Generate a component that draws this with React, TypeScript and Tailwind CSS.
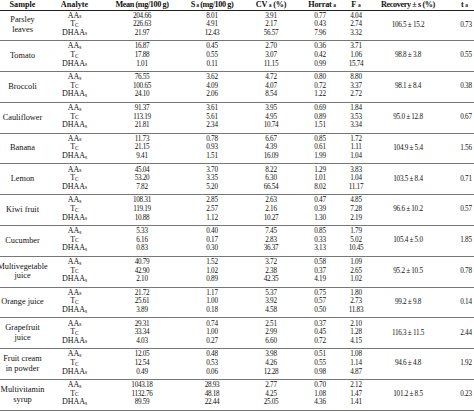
import React from "react";

type Row = [string, string, string, string, string];
type Group = { name: string[]; rows: [Row, Row, Row]; rec: string; t: string };

const groups: Group[] = [
  { name: ["Parsley", "leaves"], rows: [["204.66", "8.01", "3.91", "0.77", "4.04"], ["226.63", "4.91", "2.17", "0.43", "2.74"], ["21.97", "12.43", "56.57", "7.96", "3.32"]], rec: "106.5 ± 15.2", t: "0.73" },
  { name: ["Tomato"], rows: [["16.87", "0.45", "2.70", "0.36", "3.71"], ["17.88", "0.55", "3.07", "0.42", "1.06"], ["1.01", "0.11", "11.15", "0.99", "15.74"]], rec: "98.8 ± 3.8", t: "0.55" },
  { name: ["Broccoli"], rows: [["76.55", "3.62", "4.72", "0.80", "8.80"], ["100.65", "4.09", "4.07", "0.72", "3.37"], ["24.10", "2.06", "8.54", "1.22", "2.72"]], rec: "98.1 ± 8.4", t: "0.38" },
  { name: ["Cauliflower"], rows: [["91.37", "3.61", "3.95", "0.69", "1.84"], ["113.19", "5.61", "4.95", "0.89", "3.53"], ["21.81", "2.34", "10.74", "1.51", "3.34"]], rec: "95.0 ± 12.8", t: "0.67" },
  { name: ["Banana"], rows: [["11.73", "0.78", "6.67", "0.85", "1.72"], ["21.15", "0.93", "4.39", "0.61", "1.11"], ["9.41", "1.51", "16.09", "1.99", "1.04"]], rec: "104.9 ± 5.4", t: "1.56" },
  { name: ["Lemon"], rows: [["45.04", "3.70", "8.22", "1.29", "3.83"], ["53.20", "3.35", "6.30", "1.01", "1.04"], ["7.82", "5.20", "66.54", "8.02", "11.17"]], rec: "103.5 ± 8.4", t: "0.71" },
  { name: ["Kiwi fruit"], rows: [["108.31", "2.85", "2.63", "0.47", "4.85"], ["119.19", "2.57", "2.16", "0.39", "7.28"], ["10.88", "1.12", "10.27", "1.30", "2.19"]], rec: "96.6 ± 10.2", t: "0.57" },
  { name: ["Cucumber"], rows: [["5.33", "0.40", "7.45", "0.85", "1.79"], ["6.16", "0.17", "2.83", "0.33", "5.02"], ["0.83", "0.30", "36.37", "3.13", "10.45"]], rec: "105.4 ± 5.0", t: "1.85" },
  { name: ["Multivegetable", "juice"], rows: [["40.79", "1.52", "3.72", "0.58", "1.09"], ["42.90", "1.02", "2.38", "0.37", "2.65"], ["2.10", "0.89", "42.35", "4.19", "1.02"]], rec: "95.2 ± 10.5", t: "0.78" },
  { name: ["Orange juice"], rows: [["21.72", "1.17", "5.37", "0.75", "1.80"], ["25.61", "1.00", "3.92", "0.57", "2.73"], ["3.89", "0.18", "4.58", "0.50", "11.83"]], rec: "99.2 ± 9.8", t: "0.14" },
  { name: ["Grapefruit", "juice"], rows: [["29.31", "0.74", "2.51", "0.37", "2.10"], ["33.34", "1.00", "2.99", "0.45", "1.28"], ["4.03", "0.27", "6.60", "0.72", "4.15"]], rec: "116.3 ± 11.5", t: "2.44" },
  { name: ["Fruit cream", "in powder"], rows: [["12.05", "0.48", "3.98", "0.51", "1.08"], ["12.54", "0.53", "4.26", "0.55", "1.14"], ["0.49", "0.06", "12.28", "0.98", "4.87"]], rec: "94.6 ± 4.8", t: "1.92" },
  { name: ["Multivitamin", "syrup"], rows: [["1043.18", "28.93", "2.77", "0.70", "2.12"], ["1132.76", "48.18", "4.25", "1.08", "1.47"], ["89.59", "22.44", "25.05", "4.36", "1.41"]], rec: "101.2 ± 8.5", t: "0.23" },
];

const GRID = "grid grid-cols-[45px_59px_76px_64px_54px_44px_28px_76px_42px]";
const NUM = "text-[7.2px] tracking-[-0.3px]";

function Sup() {
  return <sup className="text-[5.5px] font-bold relative -top-[0.5px] ml-[1.5px]">a</sup>;
}

function Analyte({ i }: { i: number }) {
  if (i === 0)
    return (
      <span>
        AA<sub className="text-[5.5px] relative top-[0.5px]">s</sub>
      </span>
    );
  if (i === 1)
    return (
      <span>
        T<sub className="text-[5.5px] relative top-[0.5px]">C</sub>
      </span>
    );
  return (
    <span>
      DHAA<sub className="text-[5.5px] relative top-[0.5px]">s</sub>
    </span>
  );
}

function NumCol({ g, c }: { g: Group; c: number }) {
  return (
    <div className="flex flex-col items-center">
      {g.rows.map((r, i) => (
        <div key={i} className={`h-[8.6px] leading-[8.6px] whitespace-nowrap ${NUM}`}>
          {r[c]}
        </div>
      ))}
    </div>
  );
}

export default function App() {
  return (
    <div className="w-[474px] h-[412px] overflow-hidden bg-white text-[#111111] font-['Liberation_Serif',serif]">
      <div className="w-[488px]">
        <div className={`${GRID} h-[10.5px] border-b border-[#222222] font-bold text-[8.2px] leading-[9px] items-start`}>
          <div className="flex justify-center whitespace-nowrap">Sample</div>
          <div className="flex justify-center whitespace-nowrap">Analyte</div>
          <div className="flex justify-center whitespace-nowrap tracking-[-0.4px]">Mean (mg/100 g)</div>
          <div className="flex justify-center whitespace-nowrap tracking-[-0.4px]">
            <span>S<Sup /> (mg/100 g)</span>
          </div>
          <div className="flex justify-center whitespace-nowrap tracking-[-0.2px]">
            <span>CV<Sup /> (%)</span>
          </div>
          <div className="flex justify-center whitespace-nowrap tracking-[-0.2px] pl-[4px]">
            <span>Horrat<Sup /></span>
          </div>
          <div className="flex justify-center whitespace-nowrap">
            <span>F<Sup /></span>
          </div>
          <div className="flex justify-center whitespace-nowrap tracking-[-0.4px]">Recovery ± s (%)</div>
          <div className="flex justify-center whitespace-nowrap pr-[5px]">
            <span>t<Sup /></span>
          </div>
        </div>
        {groups.map((g, gi) => (
          <div key={gi} className={`${GRID} h-[30.8px] border-b border-[#777777] pt-[1.2px] text-[8px]`}>
            <div className="flex flex-col justify-center items-center leading-[9.5px] pb-[2px] text-[8.3px]">
              {g.name.map((n, i) => (
                <div key={i} className="flex justify-center whitespace-nowrap w-full">
                  {n}
                </div>
              ))}
            </div>
            <div className="flex flex-col items-center">
              {[0, 1, 2].map((i) => (
                <div key={i} className="h-[8.6px] leading-[8.6px] whitespace-nowrap">
                  <Analyte i={i} />
                </div>
              ))}
            </div>
            <NumCol g={g} c={0} />
            <NumCol g={g} c={1} />
            <NumCol g={g} c={2} />
            <NumCol g={g} c={3} />
            <NumCol g={g} c={4} />
            <div className={`flex items-center justify-center whitespace-nowrap pb-[2px] ${NUM}`}>{g.rec}</div>
            <div className={`flex items-center justify-center whitespace-nowrap pb-[2px] pr-[2px] ${NUM}`}>{g.t}</div>
          </div>
        ))}
      </div>
    </div>
  );
}
